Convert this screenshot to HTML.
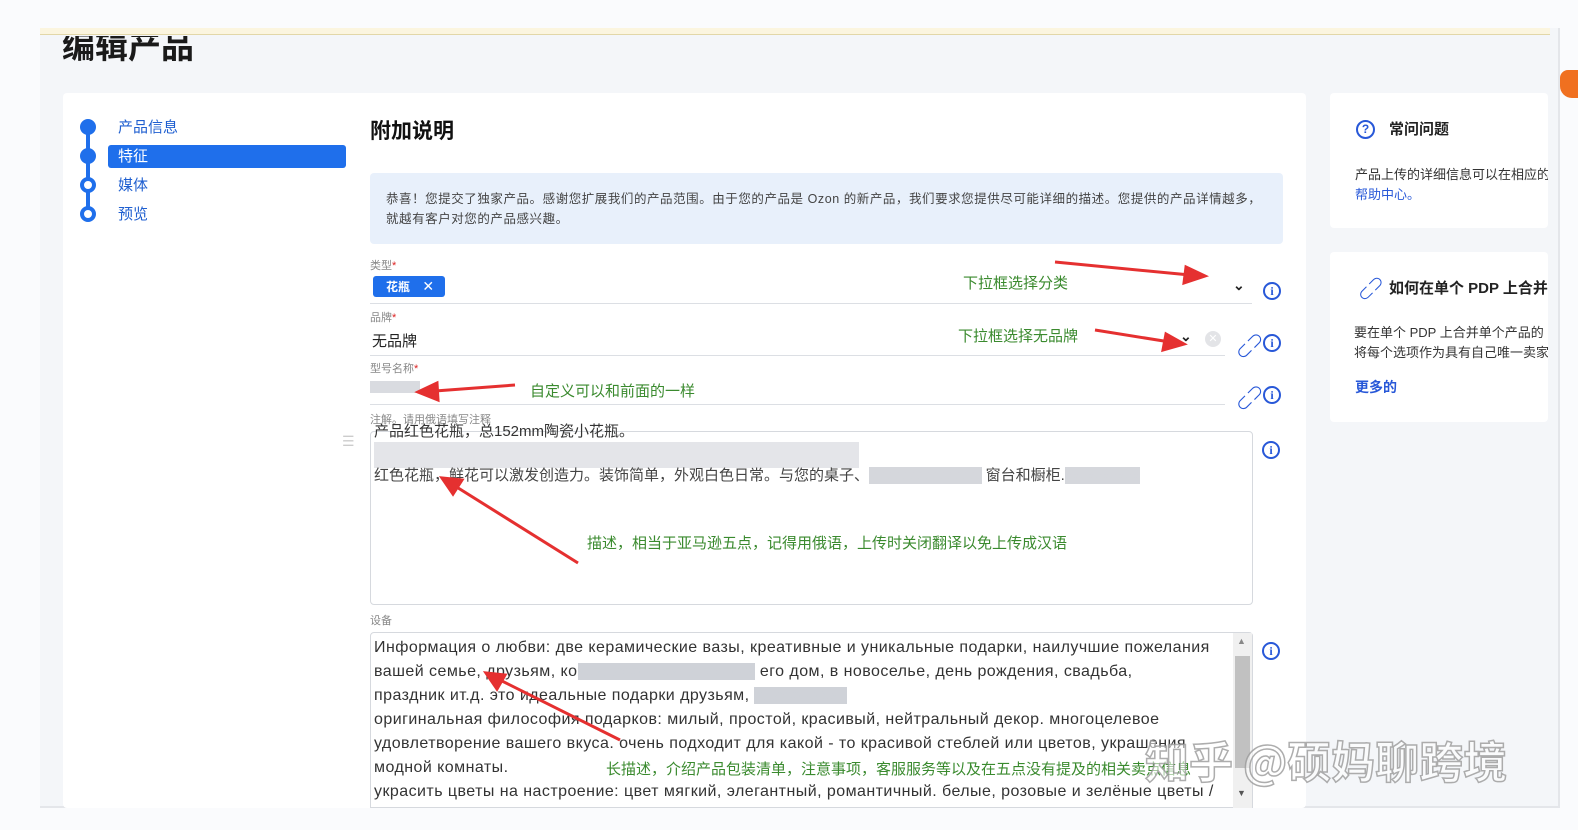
<!DOCTYPE html>
<html><head><meta charset="utf-8"><style>
*{margin:0;padding:0;box-sizing:border-box}
body{width:1578px;height:830px;background:#fafbfd;position:relative;overflow:hidden;font-family:"Liberation Sans","Noto Sans CJK SC",sans-serif;color:#222}
.a{position:absolute}
.frame{left:40px;top:28px;width:1520px;height:780px;background:#f4f6f9;border-right:2px solid #e4e6ea;border-bottom:2px solid #e4e6ea}
.card{background:#fff;border-radius:4px}
.lbl{font-size:11px;color:#888}
.red{color:#d22}
.line{height:1px;background:#dcdfe4}
.g{color:#3a8a2e;font-size:15px}
.info{width:18px;height:18px;border:2px solid #2858d8;border-radius:50%;color:#2858d8;font:bold 12px/14px "Liberation Serif",serif;text-align:center}
.blur{background:#c9ccd3;opacity:.7}
.ru{font-size:16px;letter-spacing:.45px;color:#333;line-height:24px;white-space:nowrap}
</style></head><body>
<div class="a frame"></div>
<div class="a" style="left:40px;top:28px;width:1510px;height:7px;background:#fbf5df;border-bottom:1px solid #e2d7a8"></div>
<div class="a" style="left:62px;top:36px;font-size:33px;font-weight:bold;color:#1a1a1a;line-height:30px;height:28px;overflow:hidden"><span style="position:relative;top:-4px">编辑产品</span></div>
<div class="a" style="left:1560px;top:70px;width:18px;height:28px;background:#f07020;border-radius:8px 0 0 12px"></div>

<div class="a card" style="left:63px;top:93px;width:1243px;height:715px"></div>
<div class="a card" style="left:1330px;top:93px;width:218px;height:135px"></div>
<div class="a card" style="left:1330px;top:252px;width:218px;height:170px"></div>

<div class="a" style="left:86px;top:127px;width:4px;height:86px;background:#1f6feb"></div>
<div class="a" style="left:80px;top:119px;width:16px;height:16px;border-radius:50%;background:#1f6feb"></div>
<div class="a" style="left:80px;top:148px;width:16px;height:16px;border-radius:50%;background:#1f6feb"></div>
<div class="a" style="left:80px;top:177px;width:16px;height:16px;border-radius:50%;background:#fff;border:4px solid #1f6feb"></div>
<div class="a" style="left:80px;top:206px;width:16px;height:16px;border-radius:50%;background:#fff;border:4px solid #1f6feb"></div>
<div class="a" style="left:108px;top:145px;width:238px;height:23px;background:#1f6feb;border-radius:3px"></div>
<div class="a" style="left:118px;top:118px;font-size:15px;color:#1f5fd0;line-height:20px">产品信息</div>
<div class="a" style="left:118px;top:147px;font-size:15px;color:#fff;line-height:20px">特征</div>
<div class="a" style="left:118px;top:176px;font-size:15px;color:#1f5fd0;line-height:20px">媒体</div>
<div class="a" style="left:118px;top:205px;font-size:15px;color:#1f5fd0;line-height:20px">预览</div>

<div class="a" style="left:370px;top:115px;font-size:21px;font-weight:bold;color:#111">附加说明</div>
<div class="a" style="left:370px;top:173px;width:913px;height:71px;background:#e8f0fb;border-radius:4px;padding:16px 14px 16px 16px;font-size:12.5px;letter-spacing:.55px;line-height:20px;color:#444">恭喜！您提交了独家产品。感谢您扩展我们的产品范围。由于您的产品是 Ozon 的新产品，我们要求您提供尽可能详细的描述。您提供的产品详情越多，就越有客户对您的产品感兴趣。</div>

<div class="a lbl" style="left:370px;top:257px">类型<span class="red">*</span></div>
<div class="a" style="left:373px;top:276px;width:72px;height:21px;background:#1f6feb;border-radius:3px;color:#fff;font-size:12px;font-weight:bold;line-height:21px;padding-left:13px">花瓶 <span style="font-weight:normal;margin-left:9px;font-size:14px">✕</span></div>
<div class="a line" style="left:370px;top:303px;width:882px"></div>
<div class="a" style="left:1233px;top:277px;font-size:14px;font-weight:bold">⌄</div>
<div class="a info" style="left:1263px;top:282px">i</div>
<div class="a g" style="left:963px;top:272px">下拉框选择分类</div>

<div class="a lbl" style="left:370px;top:309px">品牌<span class="red">*</span></div>
<div class="a" style="left:372px;top:330px;font-size:15px">无品牌</div>
<div class="a line" style="left:370px;top:355px;width:855px"></div>
<div class="a" style="left:1180px;top:328px;font-size:14px;font-weight:bold">⌄</div>
<div class="a" style="left:1205px;top:331px;width:16px;height:16px;border-radius:50%;background:#e3e4e7;color:#fff;font-size:11px;text-align:center;line-height:16px">✕</div>
<div class="a" style="left:1233px;top:333px;color:#2858d8;font-size:16px;transform:rotate(-45deg)">⊂⊃</div>
<div class="a info" style="left:1263px;top:334px">i</div>
<div class="a g" style="left:958px;top:325px">下拉框选择无品牌</div>

<div class="a lbl" style="left:370px;top:360px">型号名称<span class="red">*</span></div>
<div class="a blur" style="left:370px;top:381px;width:50px;height:12px"></div>
<div class="a line" style="left:370px;top:404px;width:855px"></div>
<div class="a" style="left:1233px;top:385px;color:#2858d8;font-size:16px;transform:rotate(-45deg)">⊂⊃</div>
<div class="a info" style="left:1263px;top:386px">i</div>
<div class="a g" style="left:530px;top:380px">自定义可以和前面的一样</div>

<div class="a lbl" style="left:370px;top:411px">注解。请用俄语填写注释</div>
<div class="a" style="left:342px;top:433px;color:#ccc;font-size:14px">☰</div>
<div class="a" style="left:370px;top:431px;width:883px;height:174px;border:1px solid #d6d9de;border-radius:4px"></div>
<div class="a" style="left:374px;top:420px;font-size:15px;color:#333">产品红色花瓶，总152mm陶瓷小花瓶。</div>
<div class="a blur" style="left:374px;top:442px;width:485px;height:26px;opacity:.5"></div>
<div class="a" style="left:374px;top:464px;font-size:15px;color:#444">红色花瓶，鲜花可以激发创造力。装饰简单，外观白色日常。与您的桌子、<span style="background:#d5d7dc;color:#d5d7dc">xxxxxxxxxxxxxxx</span> 窗台和橱柜.<span style="background:#d5d7dc;color:#d5d7dc">xxxxxxxxxx</span></div>
<div class="a info" style="left:1262px;top:441px">i</div>
<div class="a g" style="left:587px;top:532px">描述，相当于亚马逊五点，记得用俄语，上传时关闭翻译以免上传成汉语</div>

<div class="a lbl" style="left:370px;top:612px">设备</div>
<div class="a" style="left:370px;top:632px;width:883px;height:176px;border:1px solid #d6d9de;border-radius:4px 4px 0 0;overflow:hidden;padding:3px 0 0 3px">
<div class="ru">Информация о любви: две керамические вазы, креативные и уникальные подарки, наилучшие пожелания</div>
<div class="ru">вашей семье, друзьям, ко<span style="background:#cfd2d8;color:#cfd2d8">xxxxxxxxxxxxxxxxxxxxx</span> его дом, в новоселье, день рождения, свадьба,</div>
<div class="ru">праздник ит.д. это идеальные подарки друзьям, <span style="background:#cfd2d8;color:#cfd2d8">xxxxxxxxxxx</span></div>
<div class="ru">оригинальная философия подарков: милый, простой, красивый, нейтральный декор. многоцелевое</div>
<div class="ru">удовлетворение вашего вкуса. очень подходит для какой - то красивой стеблей или цветов, украшения</div>
<div class="ru">модной комнаты.</div>
<div class="ru">украсить цветы на настроение: цвет мягкий, элегантный, романтичный. белые, розовые и зелёные цветы /</div>
</div>
<div class="a" style="left:1233px;top:633px;width:19px;height:175px;background:#f0f0f0"></div>
<div class="a" style="left:1235px;top:656px;width:15px;height:112px;background:#c1c1c1"></div>
<div class="a" style="left:1237px;top:636px;font-size:9px;color:#888">▲</div>
<div class="a" style="left:1237px;top:788px;font-size:9px;color:#555">▼</div>
<div class="a info" style="left:1262px;top:642px">i</div>
<div class="a g" style="left:606px;top:758px">长描述，介绍产品包装清单，注意事项，客服服务等以及在五点没有提及的相关卖点信息</div>

<div class="a" style="left:1356px;top:120px;width:19px;height:19px;border:2px solid #2858d8;border-radius:50%;color:#2858d8;font-size:12px;text-align:center;line-height:15px;font-weight:bold">?</div>
<div class="a" style="left:1389px;top:118px;font-size:15px;font-weight:bold;color:#222">常问问题</div>
<div class="a" style="left:1355px;top:165px;width:193px;overflow:hidden;white-space:nowrap;font-size:13px;line-height:20px;color:#333">产品上传的详细信息可以在相应的<br><span style="color:#2858d8">帮助中心。</span></div>
<div class="a" style="left:1356px;top:278px;color:#2858d8;font-size:15px;transform:rotate(-45deg)">⊂⊃</div>
<div class="a" style="left:1389px;top:277px;width:159px;overflow:hidden;white-space:nowrap;font-size:15px;font-weight:bold;color:#222">如何在单个 PDP 上合并</div>
<div class="a" style="left:1354px;top:323px;width:194px;overflow:hidden;white-space:nowrap;font-size:13px;line-height:20px;color:#333">要在单个 PDP 上合并单个产品的<br>将每个选项作为具有自己唯一卖家</div>
<div class="a" style="left:1355px;top:377px;font-size:14px;font-weight:bold;color:#2858d8">更多的</div>

<svg class="a" style="left:0;top:0" width="1578" height="830">
<g stroke="#e53030" stroke-width="3" fill="#e53030">
<line x1="1055" y1="262" x2="1190" y2="275"/><polygon points="1205,276 1186,267 1184,283"/>
<line x1="1095" y1="330" x2="1170" y2="342"/><polygon points="1184,344 1166,334 1163,350"/>
<line x1="515" y1="385" x2="435" y2="391"/><polygon points="418,392 437,383 438,400"/>
<line x1="578" y1="563" x2="455" y2="486"/><polygon points="442,478 453,494 462,480"/>
<line x1="620" y1="740" x2="500" y2="680"/><polygon points="486,673 497,689 505,675"/>
</g>
<text x="1145" y="778" font-family="Noto Sans CJK SC,sans-serif" font-size="44" font-weight="bold" fill="#fff" fill-opacity=".55" stroke="#999" stroke-width="1.5" stroke-opacity=".8">知乎 @硕妈聊跨境</text>
</svg>
</body></html>
